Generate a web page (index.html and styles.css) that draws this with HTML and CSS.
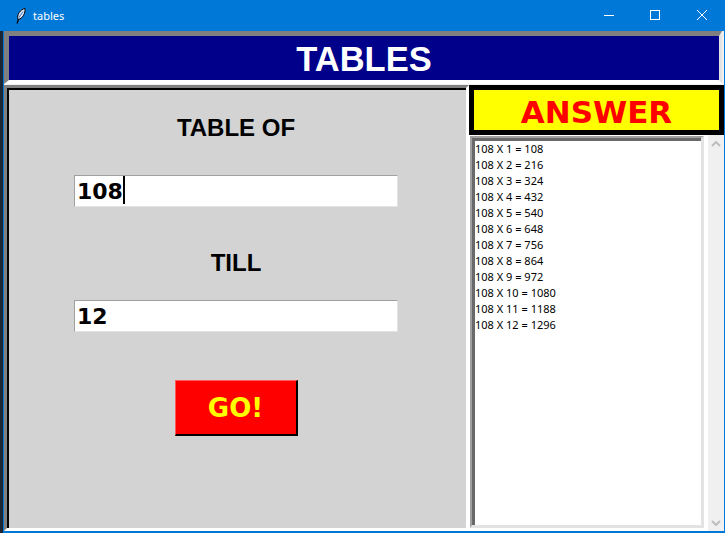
FILE: index.html
```html
<!DOCTYPE html>
<html lang="en">
<head>
  <meta charset="UTF-8">
  <title>tables</title>
  <link rel="stylesheet" href="styles.css">
</head>
<body>
  <div class="window">
    <!-- Title bar -->
    <div class="titlebar">
      <svg class="feather" width="10" height="16" viewBox="0 0 10 16">
        <path d="M1 15.5 L3 10" stroke="#000" stroke-width="1.2" fill="none"/>
        <path d="M2 11.5 C0.5 7 4 1.5 9 0.5 C9.5 5 7 10.5 2 11.5 Z" fill="#d6e2f5" stroke="#000" stroke-width="1"/>
        <path d="M3 9.5 L7 3.5" stroke="#4f78c4" stroke-width="1" fill="none"/>
      </svg>
      <span class="title-text">tables</span>
      <div class="controls">
        <svg width="46" height="31" viewBox="0 0 46 31"><path d="M17 15.5 H27" stroke="#fff" fill="none"/></svg>
        <svg width="46" height="31" viewBox="0 0 46 31"><rect x="17.5" y="10.5" width="9" height="9" stroke="#fff" fill="none"/></svg>
        <svg width="46" height="31" viewBox="0 0 46 31"><path d="M18 10 L28 20 M28 10 L18 20" stroke="#fff" fill="none"/></svg>
      </div>
    </div>

    <div class="content">
      <h1 class="banner">TABLES</h1>

      <div class="main">
        <!-- Left panel -->
        <div class="form-panel">
          <div class="form-label label-first">TABLE OF</div>
          <div class="field"><span class="caret">108</span></div>
          <div class="form-label label-till">TILL</div>
          <div class="field">12</div>
          <button class="go-btn" type="button">GO!</button>
        </div>

        <!-- Right panel -->
        <div class="answer-panel">
          <div class="answer-head">ANSWER</div>
          <div class="answer-body">
            <div class="answer-list">
              <div>108 X 1 = 108</div>
              <div>108 X 2 = 216</div>
              <div>108 X 3 = 324</div>
              <div>108 X 4 = 432</div>
              <div>108 X 5 = 540</div>
              <div>108 X 6 = 648</div>
              <div>108 X 7 = 756</div>
              <div>108 X 8 = 864</div>
              <div>108 X 9 = 972</div>
              <div>108 X 10 = 1080</div>
              <div>108 X 11 = 1188</div>
              <div>108 X 12 = 1296</div>
            </div>
            <div class="scrollbar">
              <svg width="10" height="6" viewBox="0 0 10 6"><path d="M1 5 L5 1 L9 5" stroke="#bdbdbd" stroke-width="2" fill="none"/></svg>
              <svg width="10" height="6" viewBox="0 0 10 6"><path d="M1 1 L5 5 L9 1" stroke="#bdbdbd" stroke-width="2" fill="none"/></svg>
            </div>
          </div>
        </div>
      </div>
    </div>
  </div>
</body>
</html>
```

FILE: styles.css
```css
* {
  box-sizing: border-box;
}

html, body {
  margin: 0;
  padding: 0;
  height: 100%;
  overflow: hidden;
  background: #1d2733;
}

.window {
  width: 725px;
  height: 533px;
  padding-left: 3px;
  display: flex;
  flex-direction: column;
  font-family: "Liberation Sans", Arial, sans-serif;
}

.titlebar {
  height: 31px;
  margin-left: -3px;
  padding-left: 16px;
  flex: none;
  display: flex;
  align-items: center;
  background: #0078d7;
  color: #fff;
}

.feather {
  margin-right: 7px;
}

.title-text {
  font-family: "Noto Sans", sans-serif;
  font-size: 11px;
}

.controls {
  margin-left: auto;
  display: flex;
}

.content {
  flex: 1;
  display: flex;
  flex-direction: column;
  min-height: 0;
  border: 1px solid #0078d7;
  border-top: none;
  border-bottom-width: 2px;
  background: #f0f0f0;
}

.banner {
  height: 53px;
  margin: 0 2px 0 0;
  flex: none;
  border: 5px solid;
  border-color: #808080 #e3e3e3 #fff #808080;
  border-width: 5px 3px 4px 5px;
  background: #00008b;
  color: #fff;
  font-size: 34.5px;
  line-height: 47px;
  text-align: center;
}

.main {
  flex: 1;
  display: flex;
  min-height: 0;
  padding-top: 1px;
}

.form-panel {
  width: 465px;
  flex: none;
  padding-right: 1px;
  display: flex;
  flex-direction: column;
  align-items: center;
  border: 3px solid;
  border-color: #808080 #fff #fff #808080;
  background: #d3d3d3;
  box-shadow: inset 2px 2px 0 #000;
}

.form-label {
  font-size: 24px;
  font-weight: bold;
  line-height: 28px;
  color: #000;
}

.label-first {
  margin-top: 26px;
}

.label-till {
  margin-top: 42px;
}

.field {
  width: 324px;
  height: 32px;
  margin-top: 33px;
  padding: 0 2px;
  border: 1px solid;
  border-color: #a0a0a0 #e3e3e3 #e3e3e3 #a0a0a0;
  background: #fff;
  font-family: "DejaVu Sans", sans-serif;
  font-size: 22px;
  font-weight: bold;
  line-height: 32px;
  color: #000;
}

.label-till + .field {
  margin-top: 23px;
}

.caret {
  display: inline-block;
  height: 28px;
  border-right: 2px solid #000;
}

.go-btn {
  width: 123px;
  height: 56px;
  margin-top: 48px;
  padding: 0;
  border: solid;
  border-color: #ff5a5a #000 #000 #ff5a5a;
  border-width: 1px 2px 2px 1px;
  background: #f00;
  color: #ff0;
  font-family: "DejaVu Sans", sans-serif;
  font-size: 26px;
  font-weight: bold;
}

.answer-panel {
  flex: 1;
  display: flex;
  flex-direction: column;
  min-width: 0;
  background: #fff;
}

.answer-head {
  height: 50px;
  flex: none;
  border: 5px solid #000;
  background: #ff0;
  color: #f00;
  font-family: "DejaVu Sans", sans-serif;
  font-size: 31px;
  font-weight: bold;
  line-height: 45px;
  text-align: center;
}

.answer-body {
  flex: 1;
  display: flex;
  min-height: 0;
}

.answer-list {
  width: 234px;
  margin: 1px 0 3px 1px;
  padding: 3px 0 0 3px;
  border: solid;
  border-color: #a0a0a0 #e3e3e3 #e3e3e3 #a0a0a0;
  border-width: 2px 3px 3px 2px;
  background: #fff;
  box-shadow: inset 3px 3px 0 #696969;
  font-family: "Noto Sans", sans-serif;
  font-size: 11px;
  line-height: 16px;
  color: #000;
}

.scrollbar {
  width: 16px;
  margin-left: 4px;
  padding: 6px 0 5px;
  display: flex;
  flex-direction: column;
  justify-content: space-between;
  align-items: center;
  background: #f0f0f0;
}
```
